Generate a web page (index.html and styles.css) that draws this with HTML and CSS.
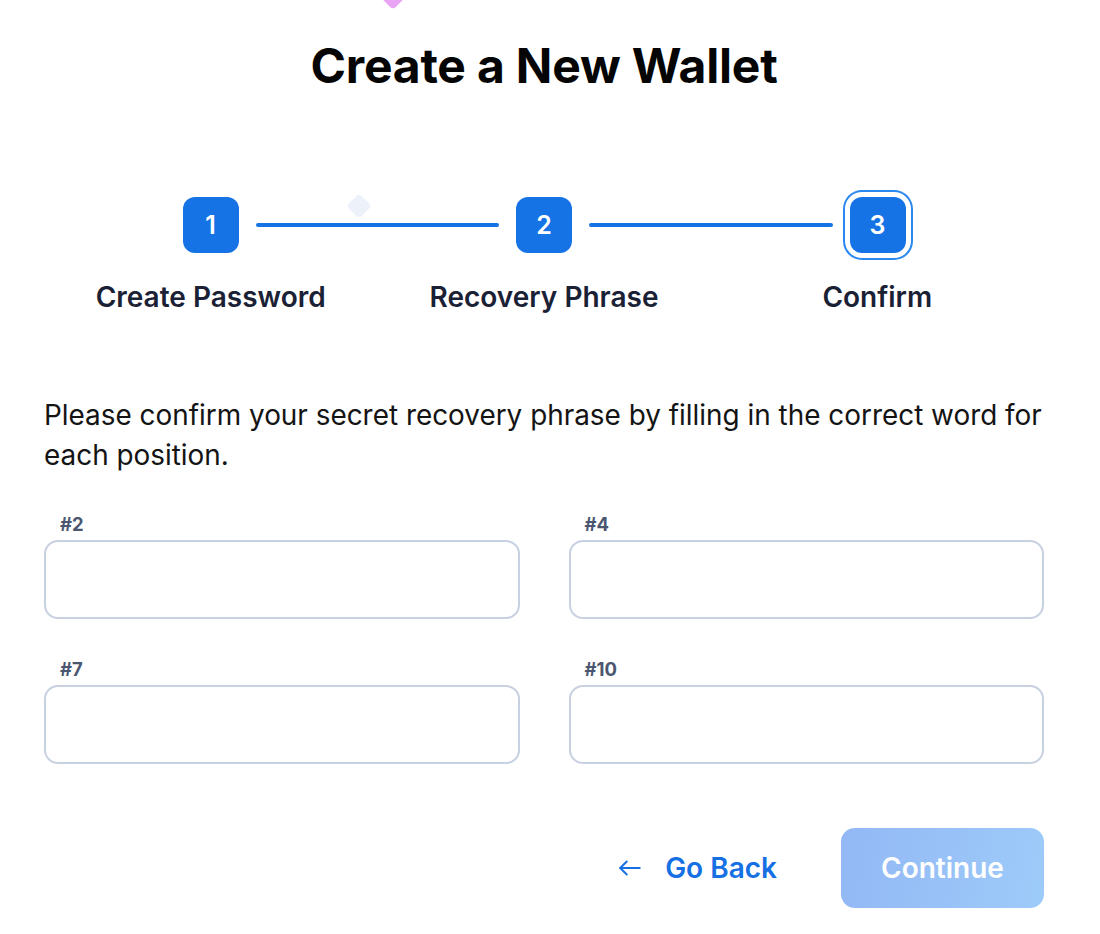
FILE: index.html
```html
<!DOCTYPE html>
<html lang="en">
<head>
<meta charset="utf-8">
<title>Create a New Wallet</title>
<link rel="stylesheet" href="styles.css">
</head>
<body>
<div class="deco deco-pink"></div>
<div class="deco deco-light"></div>
<main class="page">
  <h1 class="title">Create a New Wallet</h1>

  <section class="stepper">
    <div class="step-track">
      <div class="step-box">1</div>
      <div class="step-line"></div>
      <div class="step-box">2</div>
      <div class="step-line"></div>
      <div class="step-box step-box-current">3</div>
    </div>
    <div class="step-labels">
      <div class="step-label">Create Password</div>
      <div class="step-label">Recovery Phrase</div>
      <div class="step-label">Confirm</div>
    </div>
  </section>

  <p class="intro">Please confirm your secret recovery phrase by filling in the correct word for each position.</p>

  <form class="words">
    <label class="field">
      <span class="field-label">#2</span>
      <input class="field-input" type="text">
    </label>
    <label class="field">
      <span class="field-label">#4</span>
      <input class="field-input" type="text">
    </label>
    <label class="field">
      <span class="field-label">#7</span>
      <input class="field-input" type="text">
    </label>
    <label class="field">
      <span class="field-label">#10</span>
      <input class="field-input" type="text">
    </label>
  </form>

  <div class="actions">
    <button class="btn-back" type="button">
      <svg class="back-icon" width="24" height="24" viewBox="0 0 24 24" fill="none" stroke="currentColor" stroke-width="1.8" stroke-linecap="round" stroke-linejoin="round"><path d="M21 12H3"/><path d="M9 6l-6 6 6 6"/></svg>
      <span>Go Back</span>
    </button>
    <button class="btn-continue" type="button" disabled>Continue</button>
  </div>
</main>
</body>
</html>
```

FILE: styles.css
```css
* { box-sizing: border-box; }

html, body {
  margin: 0;
  padding: 0;
  background: #ffffff;
}

body {
  font-family: Inter, "Noto Sans", "Liberation Sans", sans-serif;
  color: #111318;
  position: relative;
  min-height: 934px;
  overflow: hidden;
}

.deco {
  position: absolute;
  transform: rotate(45deg);
  border-radius: 4px;
}

.deco-pink {
  width: 18px;
  height: 18px;
  left: 384px;
  top: -12px;
  background: #eaa4f6;
}

.deco-light {
  width: 18px;
  height: 18px;
  left: 350px;
  top: 197px;
  background: #edf2fa;
}

.page {
  width: 1000px;
  margin: 0 0 0 44px;
  padding-top: 36px;
  position: relative;
}

.title {
  margin: 0;
  text-align: center;
  font-size: 48px;
  line-height: 60px;
  font-weight: 700;
  color: #050505;
  letter-spacing: -0.2px;
}

.stepper {
  margin-top: 101px;
}

.step-track {
  display: flex;
  align-items: center;
  padding: 0 138.5px;
}

.step-box {
  width: 56px;
  height: 56px;
  flex: 0 0 56px;
  border-radius: 12px;
  background: #1673e6;
  color: #ffffff;
  font-size: 25px;
  font-weight: 600;
  display: flex;
  align-items: center;
  justify-content: center;
}

.step-box-current {
  box-shadow: 0 0 0 5px #ffffff, 0 0 0 7px #2a88f0;
}

.step-line {
  flex: 1;
  height: 4px;
  margin: 0 17px;
  border-radius: 2px;
  background: #1673e6;
}

.step-labels {
  display: grid;
  grid-template-columns: repeat(3, 1fr);
  margin-top: 26px;
}

.step-label {
  text-align: center;
  font-size: 28px;
  line-height: 36px;
  font-weight: 600;
  color: #1b2135;
}

.intro {
  margin: 80px 0 0;
  font-size: 27.9px;
  line-height: 40px;
  font-weight: 400;
  color: #141414;
}

.words {
  margin-top: 38px;
  display: grid;
  grid-template-columns: 1fr 1fr;
  column-gap: 49px;
  row-gap: 39px;
}

.field {
  display: flex;
  flex-direction: column;
}

.field-label {
  padding-left: 16px;
  font-size: 18.5px;
  line-height: 22px;
  font-weight: 700;
  color: #4b5670;
  margin-bottom: 5px;
}

.field-input {
  width: 100%;
  height: 79px;
  border: 2px solid #c8d1e1;
  border-radius: 14px;
  background: #ffffff;
  font: inherit;
  font-size: 22px;
  padding: 0 18px;
  outline: none;
}

.actions {
  margin-top: 64px;
  display: flex;
  justify-content: flex-end;
  align-items: center;
  gap: 64px;
}

.btn-back {
  display: flex;
  align-items: center;
  gap: 22px;
  border: none;
  background: none;
  padding: 0;
  font-family: inherit;
  font-size: 28px;
  font-weight: 600;
  color: #1670e4;
  cursor: pointer;
}

.back-icon {
  width: 26px;
  height: 26px;
}

.btn-continue {
  width: 203px;
  height: 80px;
  border: none;
  border-radius: 14px;
  background: linear-gradient(100deg, #93b8f5 0%, #9dcbf9 100%);
  color: #ffffff;
  font-family: inherit;
  font-size: 28px;
  font-weight: 600;
}
```
